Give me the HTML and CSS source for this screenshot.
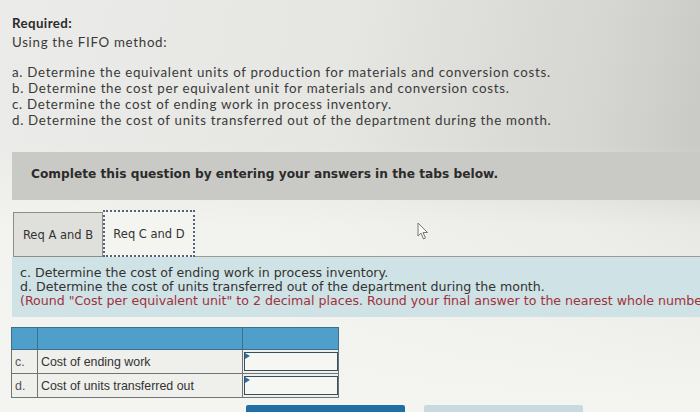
FILE: index.html
```html
<!DOCTYPE html>
<html>
<head>
<meta charset="utf-8">
<link rel="stylesheet" href="styles.css">
</head>
<body>
<div class="page">
  <div class="intro">
    <div class="req">Required:</div>
    <div class="fifo">Using the FIFO method:</div>
    <ol class="steps">
      <li>a. Determine the equivalent units of production for materials and conversion costs.</li>
      <li>b. Determine the cost per equivalent unit for materials and conversion costs.</li>
      <li>c. Determine the cost of ending work in process inventory.</li>
      <li>d. Determine the cost of units transferred out of the department during the month.</li>
    </ol>
  </div>
  <div class="band">Complete this question by entering your answers in the tabs below.</div>
  <div class="tabs">
    <div class="tab">Req A and B</div>
    <div class="tab active">Req C and D</div>
    <div class="tabfill">
      <svg class="cursor" width="13" height="19" viewBox="0 0 13 19"><path d="M1 1 L1 14 L4 11 L6.5 17 L8.5 16 L6 10.5 L10.5 10.5 Z" fill="#fbfbf8" stroke="#777" stroke-width="1"/></svg>
    </div>
  </div>
  <div class="panel">
    <div>c. Determine the cost of ending work in process inventory.</div>
    <div>d. Determine the cost of units transferred out of the department during the month.</div>
    <div class="red">(Round "Cost per equivalent unit" to 2 decimal places. Round your final answer to the nearest whole number.)</div>
  </div>
  <table class="grid">
    <tr class="head"><td class="c1"></td><td class="c2"></td><td class="c3"></td></tr>
    <tr><td class="c1">c.</td><td class="c2">Cost of ending work</td><td class="c3 in"><div class="box"><span class="tri"></span></div></td></tr>
    <tr><td class="c1">d.</td><td class="c2">Cost of units transferred out</td><td class="c3 in"><div class="box"><span class="tri"></span></div></td></tr>
  </table>
  <div class="buttons">
    <div class="btn prev"></div>
    <div class="btn next"></div>
  </div>
</div>
</body>
</html>
```
FILE: styles.css
```css
html, body {
  margin: 0;
  padding: 0;
  width: 700px;
  height: 412px;
  overflow: hidden;
}
body {
  background: linear-gradient(100deg, #ebebe9 0%, #e6e6e3 45%, #d5d5d1 80%, #c4c4c0 100%);
  font-family: Lato, "Open Sans", sans-serif;
  color: #3a3a3a;
}
.page {
  position: relative;
  height: 412px;
  background: linear-gradient(180deg, rgba(255,255,255,0) 0%, rgba(255,255,255,0) 35%, rgba(246,246,242,0.7) 55%, rgba(244,244,240,1) 100%);
}
.intro {
  padding: 15px 0 0 12px;
  font-size: 13.3px;
  letter-spacing: 0.7px;
  line-height: 16px;
}
.req { font-weight: bold; color: #2a2a2a; letter-spacing: 0.4px; }
.fifo { margin-top: 3px; }
.steps {
  list-style: none;
  margin: 14px 0 0;
  padding: 0;
  line-height: 16px;
}
.band {
  margin: 24px 0 0 12px;
  height: 48px;
  background: #c9c9c5;
  font-family: "DejaVu Sans", Verdana, sans-serif;
  font-weight: bold;
  font-size: 12.2px;
  color: #2b2b2b;
  padding: 0 0 4px 19px;
  box-sizing: border-box;
  display: flex;
  align-items: center;
}
.tabs {
  display: flex;
  margin: 10px 0 0 13px;
  height: 47px;
  align-items: flex-end;
}
.tab {
  box-sizing: border-box;
  width: 90px;
  height: 45px;
  border: 1px solid #8d8d8a;
  background: #dfdfdb;
  font-family: "DejaVu Sans", Verdana, sans-serif;
  font-size: 11.5px;
  color: #333;
  display: flex;
  align-items: center;
  justify-content: center;
}
.tab.active {
  width: 92px;
  height: 47px;
  background: #f4f4f0;
  border: 2px dotted #55627a;
}
.tabfill {
  flex: 1;
  height: 47px;
  border-bottom: 1px solid #9a9a96;
  box-sizing: border-box;
  position: relative;
}
.cursor {
  position: absolute;
  left: 222px;
  top: 12px;
}
.panel {
  margin-left: 12px;
  height: 60px;
  background: #cfe2e5;
  padding: 9px 0 0 8px;
  box-sizing: border-box;
  font-family: "DejaVu Sans", Verdana, sans-serif;
  font-size: 12.6px;
  line-height: 14px;
  color: #333;
  white-space: nowrap;
  overflow: hidden;
}
.red { color: #a2313c; }
.grid {
  margin: 10px 0 0 11px;
  border-collapse: collapse;
  font-family: "Liberation Sans", Arial, sans-serif;
  font-size: 12.4px;
  color: #333;
}
.grid td {
  border: 1px solid #6f7476;
  padding: 0 3px;
  height: 21px;
  background: #efefeb;
}
.grid .head td {
  background: #4f9fcb;
  border-color: #3f6f88;
  height: 21px;
}
.c1 { width: 19px; color: #555; }
.c2 { width: 198px; }
.c3 { width: 89px; }
.grid td.in { padding: 1px 0 1px 1px; }
.box {
  position: relative;
  height: 17px;
  border: 1px solid #35505e;
  background: #f6f6f3;
}
.tri {
  position: absolute;
  left: 0;
  top: 0;
  width: 0;
  height: 0;
  border-left: 5px solid #2f6fa8;
  border-top: 3px solid transparent;
  border-bottom: 3px solid transparent;
}
.buttons {
  display: flex;
  margin: 7px 0 0 246px;
  gap: 19px;
}
.btn {
  width: 159px;
  height: 20px;
  border-radius: 2px;
}
.prev { background: #1f6fa6; }
.next { background: #c9dade; }
```
